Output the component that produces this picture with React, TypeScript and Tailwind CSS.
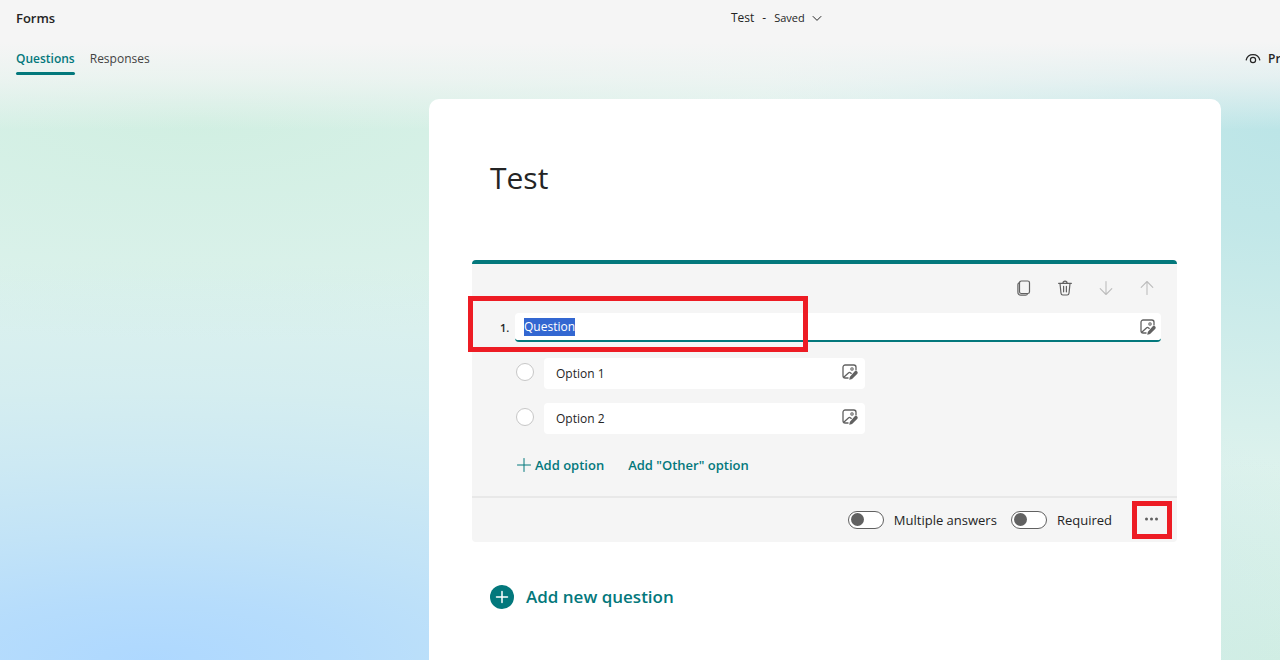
import { useEffect, useRef, useState } from 'react';

function CopyIcon() {
  return (
    <svg className="w-4 h-4" viewBox="0 0 16 16" fill="none" stroke="currentColor">
      <rect x="3.5" y="1" width="10" height="12.5" rx="1.8" strokeWidth={1.2} />
      <path
        d="M3.5 2.6C2.5 2.9 1.9 3.5 1.9 4.6V12c0 2 1.1 3.2 3.1 3.2H9.5c1.1 0 1.8-.6 2.1-1.6"
        strokeWidth={1.2}
      />
    </svg>
  );
}

function TrashIcon() {
  return (
    <svg
      className="w-4 h-4"
      viewBox="0 0 16 16"
      fill="none"
      stroke="currentColor"
      strokeWidth={1.2}
      strokeLinecap="round"
    >
      <path d="M1.6 3.3h12.8M5.9 3.2a2.1 2.1 0 014.2 0M3 3.5l1 9.8c.1 1 .8 1.7 1.8 1.7h4.4c1 0 1.7-.7 1.8-1.7l1-9.8M6.6 6.4v5.4M9.4 6.4v5.4" />
    </svg>
  );
}

function ArrowIcon({ up = false }: { up?: boolean }) {
  return (
    <svg
      className="w-4 h-4"
      viewBox="0 0 16 16"
      fill="none"
      stroke="currentColor"
      strokeWidth={1.1}
      strokeLinecap="round"
      strokeLinejoin="round"
    >
      <path d={up ? 'M8 14.5v-13M2.2 7.3L8 1.5l5.8 5.8' : 'M8 1.5v13M2.2 8.7L8 14.5l5.8-5.8'} />
    </svg>
  );
}

function ImageEditIcon() {
  return (
    <svg className="w-4 h-4 text-[#616161]" viewBox="0 0 16 16" fill="none" stroke="currentColor">
      <path
        d="M6.5 14H3.2A2.2 2.2 0 011 11.8V3.2A2.2 2.2 0 013.2 1h8.6A2.2 2.2 0 0114 3.2V6.5"
        strokeWidth={1.3}
      />
      <path d="M2 13l4.4-4.1c.7-.6 1.5-.6 2.2 0l1 .9" strokeWidth={1.3} />
      <circle cx="10" cy="5" r="1.2" strokeWidth={1.1} />
      <path
        d="M12.5 7.5c.9-.9 2-.8 2.7-.1.7.7.7 1.8-.1 2.6l-4.5 4.5c-.4.4-.8.6-1.2.7l-2.2.5.5-2.2c.1-.4.3-.8.7-1.2z"
        fill="currentColor"
        stroke="none"
      />
    </svg>
  );
}

function Annotation({ className }: { className: string }) {
  return (
    <div
      className={`absolute border-[5px] border-[#ed1c24] pointer-events-none ${className}`}
    />
  );
}

function OptionRow({ label }: { label: string }) {
  const [text, setText] = useState(label);

  return (
    <div className="flex items-center gap-[10px]">
      <input
        type="radio"
        name="answer"
        aria-label={label}
        className="appearance-none shrink-0 w-[18px] h-[18px] mb-1 rounded-full border border-[#c7c7c7] bg-white"
      />
      <div className="flex items-center w-[321px] h-[31px] pl-3 pr-[7px] rounded bg-white">
        <input
          type="text"
          aria-label={`${label} text`}
          value={text}
          onChange={(e) => setText(e.target.value)}
          className="flex-1 min-w-0 text-xs leading-[18px] outline-none"
        />
        <button aria-label={`Insert media for ${label}`} className="mb-1">
          <ImageEditIcon />
        </button>
      </div>
    </div>
  );
}

function Toggle({ label }: { label: string }) {
  return (
    <label className="flex items-center gap-[10px]">
      <input
        type="checkbox"
        role="switch"
        className="appearance-none flex items-center w-9 h-[18px] px-0.5 rounded-full border border-[#616161] bg-white before:w-[13px] before:h-[13px] before:rounded-full before:bg-[#616161] checked:justify-end"
      />
      {label}
    </label>
  );
}

function QuestionCard() {
  const [question, setQuestion] = useState('Question');
  const inputRef = useRef<HTMLInputElement>(null);

  useEffect(() => {
    inputRef.current?.focus();
    inputRef.current?.select();
  }, []);

  return (
    <section className="mt-[59px] rounded-sm border-t-4 border-[#03787c] bg-[#f5f5f5]">
      {/* Toolbar */}
      <div className="flex justify-end gap-[25px] pt-4 pr-[22px] text-[#616161]">
        <button aria-label="Copy question">
          <CopyIcon />
        </button>
        <button aria-label="Delete question">
          <TrashIcon />
        </button>
        <button aria-label="Move question down" disabled className="text-[#bdbdbd]">
          <ArrowIcon />
        </button>
        <button aria-label="Move question up" disabled className="text-[#bdbdbd]">
          <ArrowIcon up />
        </button>
      </div>

      {/* Question title */}
      <div className="relative flex items-center mt-[17px] pl-7 pr-4">
        <label htmlFor="question" className="w-[15px] text-[11px] font-semibold">
          1.
        </label>
        <div className="flex flex-1 items-center h-[29px] pt-px pl-[9px] pr-[5px] rounded border-b-2 border-[#03787c] bg-white">
          <input
            id="question"
            ref={inputRef}
            type="text"
            value={question}
            onChange={(e) => setQuestion(e.target.value)}
            className="flex-1 min-w-0 text-xs leading-[18px] outline-none selection:bg-[#3367d1] selection:text-white"
          />
          <button aria-label="Insert media">
            <ImageEditIcon />
          </button>
        </div>
        <Annotation className="-left-1 -top-[17px] w-[340px] h-14" />
      </div>

      {/* Options */}
      <div className="flex flex-col gap-[14px] pt-4 pl-11">
        <OptionRow label="Option 1" />
        <OptionRow label="Option 2" />
      </div>
      <div className="flex items-center gap-6 pt-[22px] pb-[22px] pl-11 text-[#03787c] font-semibold">
        <button className="flex items-center gap-[3px]">
          <svg className="w-4 h-4" viewBox="0 0 16 16" stroke="currentColor" strokeLinecap="round">
            <path d="M8 1.5v13M1.5 8h13" />
          </svg>
          Add option
        </button>
        <button>Add "Other" option</button>
      </div>

      {/* Footer */}
      <div className="flex items-center justify-end h-[46px] pb-px pr-[5px] border-t-2 border-[#e8e8e8]">
        <div className="flex items-center gap-[14px]">
          <Toggle label="Multiple answers" />
          <Toggle label="Required" />
        </div>
        <div className="relative flex ml-5">
          <button
            aria-label="More settings"
            className="flex items-center justify-center w-10 h-[38px] text-[#616161]"
          >
            <svg className="w-4 h-4" viewBox="0 0 16 16" fill="currentColor">
              <circle cx="2.5" cy="7" r="1.5" />
              <circle cx="7.5" cy="7" r="1.5" />
              <circle cx="12.5" cy="7" r="1.5" />
            </svg>
          </button>
          <Annotation className="inset-0" />
        </div>
      </div>
    </section>
  );
}

export default function App() {
  return (
    <div className="flex flex-col min-h-screen overflow-hidden font-['Open_Sans','Noto_Sans',sans-serif] text-[13px] leading-[18px] text-[#242424] bg-[linear-gradient(to_bottom,#f5f5f5_0px,#f5f5f5_42px,#f5f5f5b0_78px,#f5f5f500_130px),radial-gradient(520px_340px_at_100%_130px,#bce5e7_0%,#bce5e7d0_30%,#bce5e700_100%),radial-gradient(1300px_400px_at_150px_100%,#aed8ff_0%,#aed8ffd4_15%,#aed8ff91_32%,#aed8ff57_50%,#aed8ff2b_68%,#aed8ff00_100%),radial-gradient(700px_220px_at_200px_120px,#d1efe2_0%,#d1efe200_100%),radial-gradient(500px_200px_at_100%_100%,#d3efe2_0%,#d3efe200_100%),linear-gradient(#ddf2ed,#ddf2ed)]">
      <header>
        <div className="flex items-center h-9 px-4">
          <a href="#" className="w-[715px] font-semibold">
            Forms
          </a>
          <button className="flex items-center text-xs">
            <span>Test</span>
            <span className="px-2">-</span>
            <span className="text-[11px]">Saved</span>
            <svg
              className="w-[10px] h-[10px] ml-[7px]"
              viewBox="0 0 10 10"
              fill="none"
              stroke="currentColor"
            >
              <path d="M.8 3.2L5 7.4l4.2-4.2" />
            </svg>
          </button>
        </div>
        <div className="flex items-start justify-between h-[63px] pt-[14px] pl-4">
          <nav className="flex gap-[15px] text-xs leading-[18px]">
            <a href="#" className="flex flex-col gap-1 font-semibold text-[#03787c]">
              Questions
              <span className="h-[3px] rounded-full bg-[#03787c]" />
            </a>
            <a href="#" className="text-[#424242]">
              Responses
            </a>
          </nav>
          <button
            aria-label="Preview"
            className="flex items-center gap-[7px] w-[35px] text-xs leading-[18px] font-semibold whitespace-nowrap"
          >
            <svg
              className="w-4 h-4 shrink-0"
              viewBox="0 0 16 16"
              fill="none"
              stroke="currentColor"
              strokeWidth={1.2}
              strokeLinecap="round"
            >
              <path d="M1.2 9C2 5.7 4.7 3.6 8 3.6S14 5.7 14.8 9" />
              <circle cx="8" cy="9" r="2.6" />
            </svg>
            Pr
          </button>
        </div>
      </header>

      <main className="flex-1 ml-[429px] mr-[59px] pt-14 pl-[43px] pr-11 rounded-t-[10px] bg-white">
        <h1 className="pl-[18px] text-[30px] leading-[46px]">Test</h1>
        <QuestionCard />
        <button className="flex items-center gap-3 mt-[41px] ml-[18px] text-[17px] leading-7 font-semibold text-[#03787c]">
          <svg className="w-6 h-6" viewBox="0 0 24 24">
            <circle cx="12" cy="12" r="12" fill="currentColor" />
            <path
              d="M12 6.5v11M6.5 12h11"
              stroke="#fff"
              strokeWidth={1.5}
              strokeLinecap="round"
            />
          </svg>
          Add new question
        </button>
      </main>
    </div>
  );
}
